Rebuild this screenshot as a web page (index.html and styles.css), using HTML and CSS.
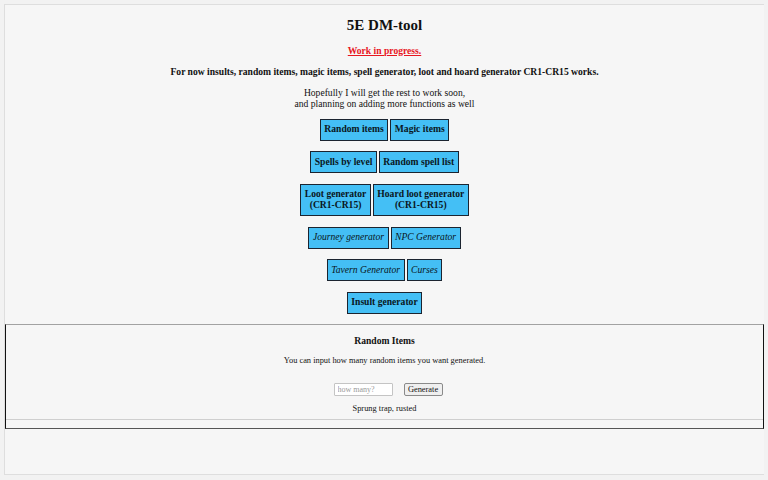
FILE: index.html
```html
<!DOCTYPE html>
<html lang="en">
<head>
<meta charset="utf-8">
<title>5E DM-tool</title>
<link rel="stylesheet" href="styles.css">
</head>
<body>
<div class="page">
  <h1 class="title">5E DM-tool</h1>
  <p class="wip">Work in progress.</p>
  <p class="note">For now insults, random items, magic items, spell generator, loot and hoard generator CR1-CR15 works.</p>
  <p class="hope">Hopefully I will get the rest to work soon,<br>and planning on adding more functions as well</p>

  <div class="row">
    <button class="btn">Random items</button>
    <button class="btn">Magic items</button>
  </div>
  <div class="row">
    <button class="btn">Spells by level</button>
    <button class="btn">Random spell list</button>
  </div>
  <div class="row">
    <button class="btn">Loot generator<br>(CR1-CR15)</button>
    <button class="btn">Hoard loot generator<br>(CR1-CR15)</button>
  </div>
  <div class="row">
    <button class="btn btn-soon">Journey generator</button>
    <button class="btn btn-soon">NPC Generator</button>
  </div>
  <div class="row">
    <button class="btn btn-soon">Tavern Generator</button>
    <button class="btn btn-soon">Curses</button>
  </div>
  <div class="row">
    <button class="btn">Insult generator</button>
  </div>

  <section class="panel">
    <h2 class="panel-title">Random Items</h2>
    <p class="panel-text">You can input how many random items you want generated.</p>
    <div class="form">
      <input class="count" type="text" placeholder="how many?">
      <button class="gen">Generate</button>
    </div>
    <p class="result">Sprung trap, rusted</p>
    <hr class="rule">
  </section>
</div>
</body>
</html>
```

FILE: styles.css
```css
html {
  background: #f2f2f2;
}
body {
  margin: 4px;
  font-family: "Liberation Serif", "Times New Roman", serif;
  color: #111;
  background: #f2f2f2;
}
.page {
  box-sizing: border-box;
  height: 471px;
  width: 761px;
  border: 1px solid #dedede;
  background: #f6f6f6;
  padding-top: 11px;
  text-align: center;
}
.title {
  margin: 0;
  font-size: 15px;
  line-height: 18px;
  font-weight: bold;
}
.wip {
  margin: 10.5px 0 0;
  font-size: 9.6px;
  line-height: 11px;
  font-weight: bold;
  color: #e8171f;
  text-decoration: underline;
}
.note {
  margin: 10px 0 0;
  font-size: 9.6px;
  line-height: 11px;
  font-weight: bold;
}
.hope {
  margin: 11.5px 0 0;
  font-size: 9.6px;
  line-height: 10.5px;
}
.row {
  display: flex;
  justify-content: center;
  align-items: flex-start;
  gap: 2px;
  margin-top: 10.5px;
}
.row:first-of-type {
  margin-top: 9.5px;
}
.btn {
  margin: 0;
  padding: 4.75px 3.5px;
  font-family: "Liberation Serif", "Times New Roman", serif;
  font-size: 9.6px;
  line-height: 10.5px;
  font-weight: bold;
  color: #0a1622;
  background: #44bff5;
  border: 1px solid #1b2430;
  border-radius: 0;
}
.btn-soon {
  font-style: italic;
  font-weight: normal;
}
.panel {
  box-sizing: border-box;
  margin-top: 10.5px;
  border-style: solid;
  border-width: 1px;
  border-color: #a2a2a2 #111 #555 #111;
  padding-top: 9.5px;
  padding-bottom: 8px;
}
.panel-title {
  margin: 0;
  font-size: 9.6px;
  line-height: 11px;
  font-weight: bold;
}
.panel-text {
  margin: 10.5px 0 0;
  font-size: 8.4px;
  line-height: 10px;
}
.form {
  display: flex;
  justify-content: center;
  gap: 11px;
  margin-top: 17px;
  padding-left: 7px;
}
.count {
  box-sizing: border-box;
  width: 59px;
  height: 13px;
  margin: 0;
  padding: 0 3px;
  font-family: "Liberation Serif", "Times New Roman", serif;
  font-size: 8px;
  border: 1px solid #c4c4c4;
  border-radius: 1px;
  background: #fff;
}
.count::placeholder {
  color: #9a9a9a;
}
.gen {
  box-sizing: border-box;
  width: 39px;
  height: 13px;
  margin: 0;
  padding: 0;
  font-family: "Liberation Serif", "Times New Roman", serif;
  font-size: 8.4px;
  color: #111;
  background: #efefef;
  border: 1px solid #8a8a8a;
  border-radius: 2px;
}
.result {
  margin: 8px 0 0;
  font-size: 8.4px;
  line-height: 10px;
}
.rule {
  margin: 5px 0 0;
  border: 0;
  border-top: 1px solid #cfcfcf;
  height: 0;
}
```
